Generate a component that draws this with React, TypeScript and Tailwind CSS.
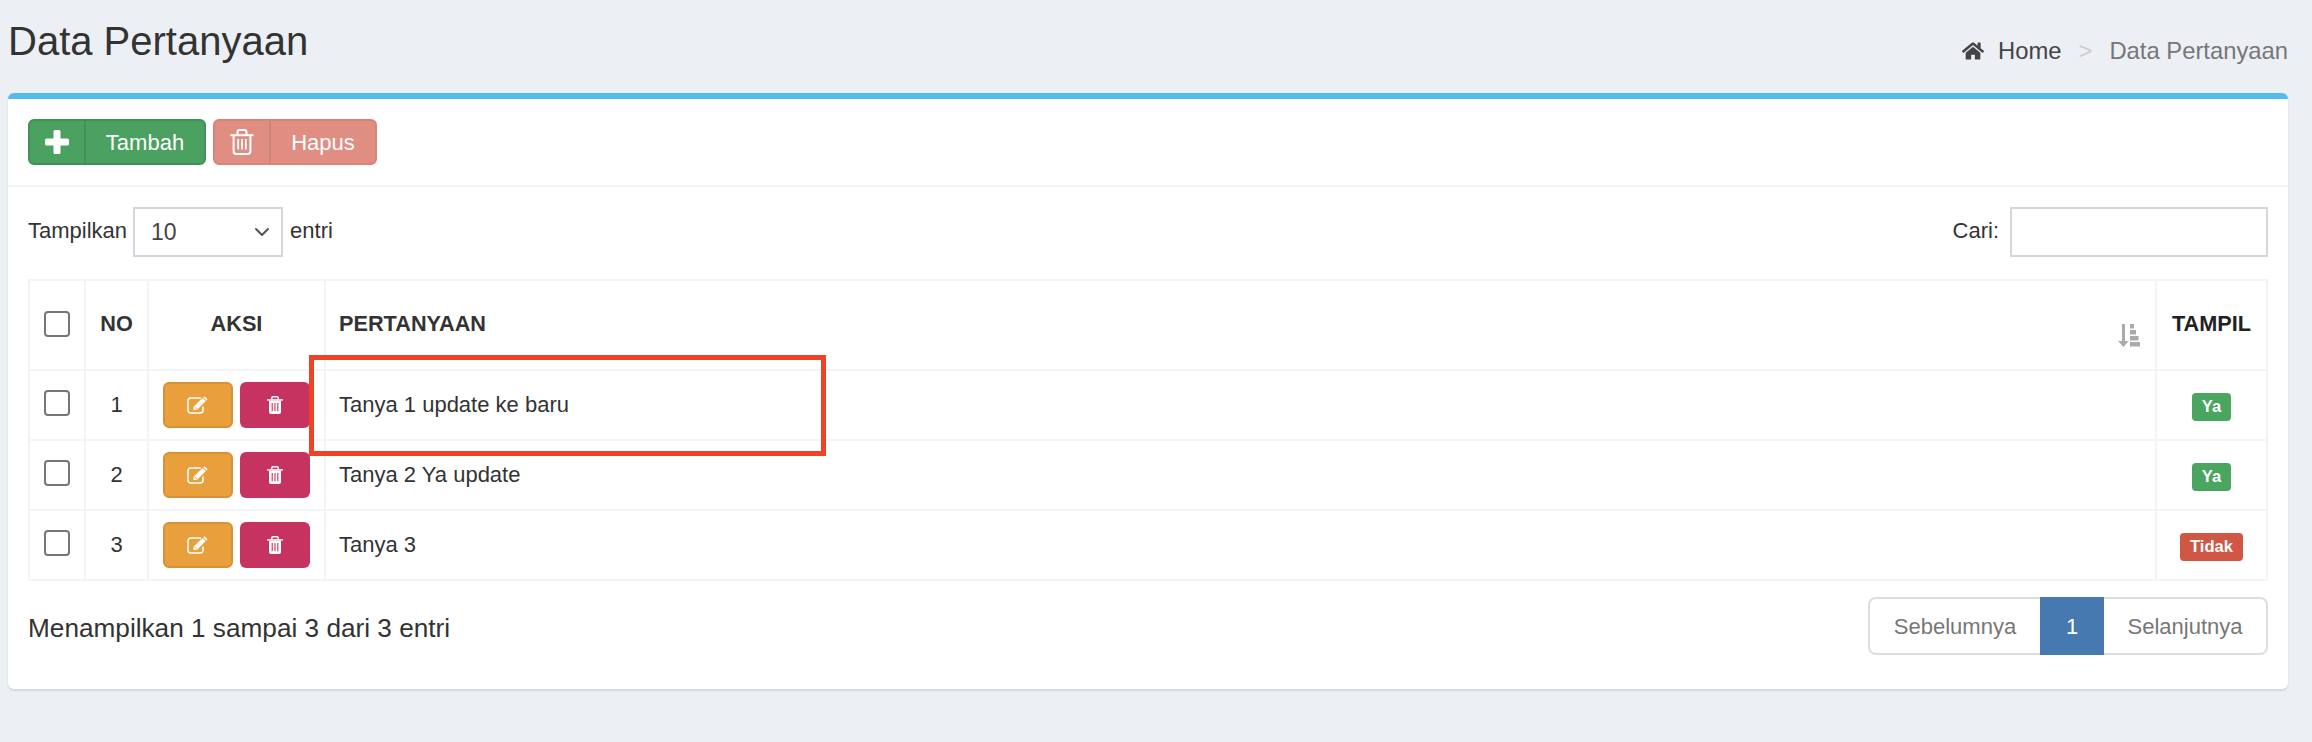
import React from "react";
import { FaHome } from "react-icons/fa";
import { LuChevronDown } from "react-icons/lu";

const rows = [
  { no: 1, q: "Tanya 1 update ke baru", on: true },
  { no: 2, q: "Tanya 2 Ya update", on: true },
  { no: 3, q: "Tanya 3", on: false },
];

function Box() {
  return <div className="w-[26px] h-[26px] rounded-[4px] border-2 border-[#767676] bg-white" />;
}

function PlusIcon() {
  return (
    <svg viewBox="0 0 24 24" className="w-[24px] h-[24px]" fill="currentColor">
      <rect x="8.5" y="0" width="7" height="24" rx="1.6" />
      <rect x="0" y="8.5" width="24" height="7" rx="1.6" />
    </svg>
  );
}

function TrashOutline() {
  return (
    <svg viewBox="0 0 24 26" className="w-[24px] h-[26px]" fill="none" stroke="currentColor" strokeWidth="2">
      <path d="M0.5 6.2H23.5" />
      <path d="M7.5 6V3.2Q7.5 1 9.7 1H14.3Q16.5 1 16.5 3.2V6" />
      <path d="M3.6 6.2V22.2Q3.6 25 6.4 25H17.6Q20.4 25 20.4 22.2V6.2" />
      <path d="M8.2 10V20.5M12 10V20.5M15.8 10V20.5" strokeWidth="1.8" />
    </svg>
  );
}

function TrashSolid() {
  return (
    <svg viewBox="0 0 16 18" className="w-[16px] h-[18px]">
      <path d="M0 3.2H16V4.6H0Z" fill="#fff" />
      <path d="M4.8 3.5V1.8Q4.8 0.7 5.9 0.7H10.1Q11.2 0.7 11.2 1.8V3.5" fill="none" stroke="#fff" strokeWidth="1.4" />
      <path d="M2 4.4H14V16Q14 18 12 18H4Q2 18 2 16Z" fill="#fff" />
      <path d="M5.2 7V15.2M8 7V15.2M10.8 7V15.2" stroke="#c63361" strokeWidth="1.1" />
    </svg>
  );
}

function EditIcon() {
  return (
    <svg viewBox="0 0 22 18" className="w-[22px] h-[18px]">
      <path d="M13.5 2H4Q1 2 1 5V14Q1 17 4 17H13Q16 17 16 14V11" fill="none" stroke="#fff" strokeWidth="1.5" strokeLinecap="round" />
      <path d="M6.5 10.8L15.6 1.9L18.8 5.1L9.8 14.1H6.5Z" fill="#fff" />
      <path d="M16.6 0.9Q17.4 0.2 18.2 0.9L20 2.7Q20.8 3.5 20 4.2L19.6 4.6L16.2 1.3Z" fill="#fff" />
      <path d="M7.5 10.9L9.9 13.2" stroke="#e99f3c" strokeWidth="1" />
    </svg>
  );
}

function SortIcon() {
  return (
    <svg viewBox="0 0 22 23" className="w-[22px] h-[23px]" fill="#aaa">
      <path d="M4 0H7V17H10.6L5.5 23L0 17H4Z" />
      <rect x="12" y="0" width="4" height="4.5" />
      <rect x="12" y="6" width="6" height="4.5" />
      <rect x="12" y="12" width="8.5" height="4.5" />
      <rect x="12" y="18" width="10" height="4.5" />
    </svg>
  );
}

export default function App() {
  return (
    <div className="min-h-[742px] bg-[#ecf0f5] font-['Liberation_Sans',Arial,sans-serif] text-[#333]">
      <div className="relative">
        <header className="h-[93px] flex justify-between pl-[8px] pr-[24px]">
          <h1 className="text-[40px] leading-[44px] pt-[19px] text-[#333]">Data Pertanyaan</h1>
          <div className="flex items-center h-[24px] mt-[39px] text-[23.8px] leading-[24px]">
            <FaHome className="text-[#444] text-[22px] mr-[14px]" />
            <span className="text-[#444]">Home</span>
            <span className="text-[#ccc] mx-[17px]">&gt;</span>
            <span className="text-[#777]">Data Pertanyaan</span>
          </div>
        </header>

        <main className="mx-[8px] w-[2280px] h-[596px] bg-white rounded-[6px] border-t-[6px] border-[#51bbea] shadow-[0_2px_2px_rgba(0,0,0,0.1)]">
          <div className="h-[88px] border-b-2 border-[#f4f4f4] pt-[20px] pl-[20px] flex gap-[7px]">
            <button className="h-[46px] w-[178px] flex rounded-[6px] bg-[#4aa160] border-2 border-[#3f9155] text-white text-[22px]">
              <span className="w-[56px] h-full flex items-center justify-center border-r-2 border-[#3f9155]"><PlusIcon /></span>
              <span className="flex-1 h-full flex items-center justify-center">Tambah</span>
            </button>
            <button className="h-[46px] w-[164px] flex rounded-[6px] bg-[#e08e82] border-2 border-[#d98376] text-white text-[22px]">
              <span className="w-[56px] h-full flex items-center justify-center border-r-2 border-[#cf8478]"><TrashOutline /></span>
              <span className="flex-1 h-full flex items-center justify-center">Hapus</span>
            </button>
          </div>

          <div className="px-[20px]">
            <div className="h-[50px] mt-[20px] flex justify-between items-center text-[22px]">
              <div className="flex items-center">
                <span className="pb-[3px]">Tampilkan</span>
                <div className="ml-[6px] w-[150px] h-[50px] border-2 border-[#d2d6de] flex items-center justify-between pl-[16px] pr-[7px] text-[#444] text-[23px]">
                  <span>10</span>
                  <LuChevronDown className="text-[#555] text-[24px]" />
                </div>
                <span className="ml-[7px] pb-[3px]">entri</span>
              </div>
              <div className="flex items-center">
                <span className="pb-[3px]">Cari:</span>
                <input className="ml-[11px] w-[258px] h-[50px] border-2 border-[#d2d6de] bg-white" />
              </div>
            </div>

            <table className="mt-[22px] w-[2240px] table-fixed border-collapse border-2 border-[#f4f4f4] text-[22px]">
              <colgroup>
                <col className="w-[56px]" />
                <col className="w-[63px]" />
                <col className="w-[177px]" />
                <col />
                <col className="w-[111px]" />
              </colgroup>
              <thead>
                <tr className="h-[90px] font-bold text-[21.7px]">
                  <th className="border-2 border-[#f4f4f4]"><div className="flex justify-center -mt-[2px]"><Box /></div></th>
                  <th className="border-2 border-[#f4f4f4]"><span className="block -mt-[1px]">NO</span></th>
                  <th className="border-2 border-[#f4f4f4]"><span className="block -mt-[1px]">AKSI</span></th>
                  <th className="border-2 border-[#f4f4f4] relative text-left pl-[13px]">
                    <span className="block -mt-[1px]">PERTANYAAN</span>
                    <div className="absolute right-[15px] bottom-[22px]"><SortIcon /></div>
                  </th>
                  <th className="border-2 border-[#f4f4f4]"><span className="block -mt-[1px] text-[#222]">TAMPIL</span></th>
                </tr>
              </thead>
              <tbody>
                {rows.map((r) => (
                  <tr key={r.no} className="h-[70px]">
                    <td className="border-2 border-[#f4f4f4]"><div className="flex justify-center -mt-[5px]"><Box /></div></td>
                    <td className="border-2 border-[#f4f4f4] text-center"><span className="block -mt-[1px]">{r.no}</span></td>
                    <td className="border-2 border-[#f4f4f4]">
                      <div className="flex gap-[7px] pl-[14px]">
                        <button className="w-[70px] h-[46px] rounded-[6px] bg-[#e99f3c] border-2 border-[#d59236] flex items-center justify-center"><EditIcon /></button>
                        <button className="w-[70px] h-[46px] rounded-[6px] bg-[#c63361] flex items-center justify-center"><TrashSolid /></button>
                      </div>
                    </td>
                    <td className="border-2 border-[#f4f4f4] pl-[13px]"><span className="block -mt-[1px]">{r.q}</span></td>
                    <td className="border-2 border-[#f4f4f4] text-center pt-[1px]">
                      <span className={`inline-block h-[28px] leading-[26px] rounded-[4px] text-white font-bold text-[16.5px] align-middle ${r.on ? "w-[39px] bg-[#4aa561]" : "w-[63px] bg-[#d05743]"}`}>{r.on ? "Ya" : "Tidak"}</span>
                    </td>
                  </tr>
                ))}
              </tbody>
            </table>

            <div className="mt-[16px] flex justify-between items-start">
              <div className="text-[26.2px] leading-[62px] text-[#333]">Menampilkan 1 sampai 3 dari 3 entri</div>
              <div className="flex h-[58px] text-[22px] text-[#777]">
                <span className="w-[172px] flex items-center justify-center border-2 border-r-0 border-[#ddd] rounded-l-[8px]">Sebelumnya</span>
                <span className="w-[64px] flex items-center justify-center bg-[#4679b0] text-white">1</span>
                <span className="w-[164px] flex items-center justify-center border-2 border-l-0 border-[#ddd] rounded-r-[8px]">Selanjutnya</span>
              </div>
            </div>
          </div>
        </main>

        <div className="absolute left-[309px] top-[355px] w-[517px] h-[101px] border-[5px] border-[#ee4425]" />
      </div>
    </div>
  );
}
